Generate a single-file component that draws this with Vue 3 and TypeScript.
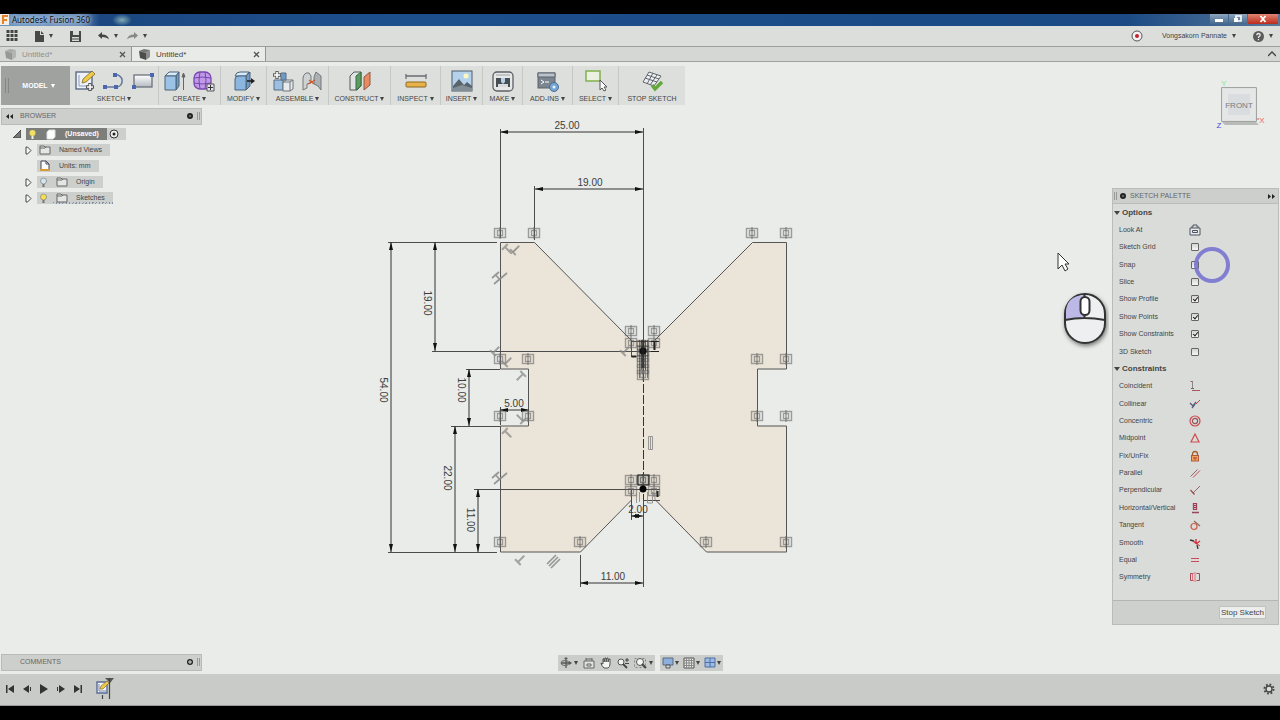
<script setup lang="ts">
import { ref } from 'vue'

interface Tool { icon: string; name: string }
interface Group { label: string; size: string; menu: boolean; tools: Tool[] }
interface Dim { x: number; y: number; text: string; vertical?: boolean }

const icons: Record<string, string> = {
  sketch: '<rect x="2" y="2" width="16" height="17" fill="#eef2f8" stroke="#5b6983" stroke-width="1.4"/><path d="M5 5v11h11" fill="none" stroke="#8d9bb6"/><path d="M8 13l1-4 9-8 3 3-9 8z" fill="#efc94a" stroke="#6d5a20" stroke-width=".7"/><path d="M16 13v8M12 17h8" stroke="#555" stroke-width="3.4"/><path d="M16 14v6M13 17h6" stroke="#fff" stroke-width="1.6"/>',
  line: '<path d="M2 17h11M11 5c10-2 11 12 2 12" fill="none" stroke="#63789a" stroke-width="1.5"/><path d="M0 15h4v4H0zM11 15h4v4h-4zM10 3h4v4h-4z" fill="#4c67ae"/>',
  rect: '<defs><linearGradient id="gr" x2="0" y2="1"><stop stop-color="#fff"/><stop offset="1" stop-color="#b4bac0"/></linearGradient></defs><rect x="2" y="5" width="18" height="12" fill="url(#gr)" stroke="#6a727b" stroke-width="1.3"/><path d="M0 15h4v4H0zM18 3h4v4h-4z" fill="#4c67ae"/>',
  extrude: '<path d="M1 6l4-4h10l-3 4z" fill="#d7eaf9" stroke="#4d6378"/><path d="M12 6l3-4v14l-3 4z" fill="#6f9bc5" stroke="#4d6378"/><path d="M1 6h11v14H1z" fill="#9cc3e6" stroke="#4d6378"/><path d="M19.500 20V5M18 7l1.500-4L21 7z" fill="#666" stroke="#666"/>',
  form: '<rect x="1" y="2" width="17" height="17" rx="6" fill="#c09ae8" stroke="#7a48b2" stroke-width="1.3"/><path d="M7 2q-2 8 0 17M12 2q2 8 0 17M1 8q8-2 17 0M1 13q8 2 17 0" fill="none" stroke="#7546ac"/><path d="M14 14h7v7h-7z" fill="#e7e3ec" stroke="#555"/><path d="M17.500 15v5M15 17.500h5" stroke="#333"/>',
  modify: '<path d="M2 6q1-4 5-4h9l-3 4z" fill="#d7eaf9" stroke="#4d6378"/><path d="M13 6l4-4v14l-4 4z" fill="#6f9bc5" stroke="#4d6378"/><path d="M2 20V9q0-3 4-3h7v14z" fill="#8ab6e0" stroke="#4d6378"/><path d="M14 11h6" stroke="#222" stroke-width="1.6"/><path d="M18 8l4 3-4 3z" fill="#222"/>',
  component: '<path d="M2 10h9v10H2z" fill="#9abfe2" stroke="#5b6c80"/><path d="M11 12l3-2h7v9l-3 2h-7z" fill="#e8ebee" stroke="#6c757d"/><path d="M11 12h7v9M18 12l3-2" fill="none" stroke="#6c757d"/><path d="M7 6l2-3h5v7H9V6z" fill="#6c9cc9" stroke="#5b6c80"/><path d="M5 1v8M1 5h8" stroke="#666" stroke-width="3.400"/><path d="M5 2v6M2 5h6" stroke="#fff" stroke-width="1.600"/>',
  joint: '<path d="M2 20V8q1-6 6-5l2 3v7l-4 1v4z" fill="#cfd2d3" stroke="#72787a"/><path d="M20 20V6l-5-4-2 5v7l4 2z" fill="#aab0b3" stroke="#72787a"/><path d="M7 14l7-4M8 10l5 4" stroke="#cc5a2c" stroke-width="1.200"/>',
  construct: '<path d="M1 6l4-4h7v14l-4 4H1z" fill="#e0e5e4" stroke="#525b58"/><path d="M7 6l5-4v14l-5 4z" fill="#5a9c61" stroke="#3d6b43"/><path d="M15 7l6-5v13l-6 5z" fill="#e98a60" stroke="#8d5a45"/>',
  inspect: '<path d="M1 6h20M1 4v5M21 4v5" stroke="#6b6f73" stroke-width="1.300"/><rect x="1" y="12" width="20" height="5" rx="1" fill="#e8b24a" stroke="#8b6720"/>',
  insert: '<rect x="1" y="1" width="20" height="20" fill="#b5d2ec" stroke="#4f5c68"/><circle cx="15" cy="6" r="2.500" fill="#fff7bd"/><path d="M2 16l6-7 5 6 3-3 5 4v4H2z" fill="#59636c"/><path d="M2 18l9-3 10 3v3H2z" fill="#838d95"/>',
  make: '<rect x="1" y="2" width="20" height="19" rx="4" fill="#e6e8e8" stroke="#5d6165" stroke-width="1.300"/><path d="M4 8h14v9H4z" fill="#464d53"/><path d="M6 14h10v3H6z" fill="#d8dadd"/><path d="M9 8h4v4l-2 2-2-2z" fill="#b7d0ea"/><path d="M4 5h14" stroke="#9da1a4"/>',
  addins: '<rect x="1" y="3" width="17" height="15" fill="#7b858f" stroke="#5b636e"/><path d="M1 3h17v4H1z" fill="#bcc2ca" stroke="#5b636e"/><path d="M4 10l3 2-3 2M8 12h4" fill="none" stroke="#fff"/><circle cx="17" cy="17" r="4.500" fill="#76a5d3" stroke="#4c6e92"/><circle cx="17" cy="17" r="1.500" fill="#e9f1f9"/>',
  select: '<rect x="1" y="1" width="14" height="10" fill="#eaf0e2" stroke="#82b04c" stroke-width="1.500"/><path d="M15 10v10l2-2 2 3 2-1-2-3h3z" fill="#fff" stroke="#555"/>',
  stop: '<path d="M8 2l12 4-7 10-11-4z" fill="#edf0f2" stroke="#60666b"/><path d="M6 5l12 4M4 8l12 4M12 3L6 14M16 5L9 15" fill="none" stroke="#60666b"/><path d="M11 15l3 4 7-7" fill="none" stroke="#62a83c" stroke-width="3.400"/>',
}

const groups: Group[] = [
  { label: 'SKETCH', size: 'g-sketch', menu: true, tools: [{ icon: 'sketch', name: 'Create Sketch' }, { icon: 'line', name: 'Line' }, { icon: 'rect', name: 'Rectangle' }] },
  { label: 'CREATE', size: 'g-pair', menu: true, tools: [{ icon: 'extrude', name: 'Extrude' }, { icon: 'form', name: 'Create Form' }] },
  { label: 'MODIFY', size: 'g-46', menu: true, tools: [{ icon: 'modify', name: 'Press Pull' }] },
  { label: 'ASSEMBLE', size: 'g-pair', menu: true, tools: [{ icon: 'component', name: 'New Component' }, { icon: 'joint', name: 'Joint' }] },
  { label: 'CONSTRUCT', size: 'g-pair', menu: true, tools: [{ icon: 'construct', name: 'Offset Plane' }] },
  { label: 'INSPECT', size: 'g-50', menu: true, tools: [{ icon: 'inspect', name: 'Measure' }] },
  { label: 'INSERT', size: 'g-42', menu: true, tools: [{ icon: 'insert', name: 'Decal' }] },
  { label: 'MAKE', size: 'g-40', menu: true, tools: [{ icon: 'make', name: '3D Print' }] },
  { label: 'ADD-INS', size: 'g-50', menu: true, tools: [{ icon: 'addins', name: 'Scripts and Add-Ins' }] },
  { label: 'SELECT', size: 'g-46', menu: true, tools: [{ icon: 'select', name: 'Select' }] },
  { label: 'STOP SKETCH', size: 'g-stop', menu: false, tools: [{ icon: 'stop', name: 'Stop Sketch' }] },
]

const options = ref([
  { id: 'grid', label: 'Sketch Grid', on: false },
  { id: 'snap', label: 'Snap', on: false },
  { id: 'slice', label: 'Slice', on: false },
  { id: 'profile', label: 'Show Profile', on: true },
  { id: 'points', label: 'Show Points', on: true },
  { id: 'constraints', label: 'Show Constraints', on: true },
  { id: 'sketch3d', label: '3D Sketch', on: false },
])

const constraints = [
  { label: 'Coincident', svg: '<path d="M3.500 1v8" stroke="#888"/><path d="M1.500 1.500h2M3 10.500h8" stroke="#a8585c"/><path d="M2 8.500h3" stroke="#666"/>' },
  { label: 'Collinear', svg: '<path d="M7 6l4-4" stroke="#c6484c"/><path d="M1 5l3 3 3-4M3 10l3-4" fill="none" stroke="#555c77" stroke-width="1.300"/>' },
  { label: 'Concentric', svg: '<circle cx="6" cy="6" r="5" fill="none" stroke="#cc4a4e" stroke-width="1.200"/><circle cx="6" cy="6" r="2.600" fill="none" stroke="#96545a" stroke-width="1.200"/>' },
  { label: 'Midpoint', svg: '<path d="M6 2l4 8H2z" fill="none" stroke="#d04a4e" stroke-width="1.200"/>' },
  { label: 'Fix/UnFix', svg: '<path d="M3.500 6V4q0-2.500 2.500-2.500T8.500 4v2" fill="none" stroke="#a5602c" stroke-width="1.300"/><rect x="2.500" y="5.500" width="7" height="5.500" fill="#eda558" stroke="#b05a3c"/><path d="M4 8h4M6 7v3" stroke="#b44"/>' },
  { label: 'Parallel', svg: '<path d="M1.500 9.500l7-7" stroke="#8d6a70"/><path d="M4 10.500l7-7" stroke="#d0484c"/>' },
  { label: 'Perpendicular', svg: '<path d="M4 9l7-7" stroke="#8d6a6c"/><path d="M1.500 6l4 4.500" stroke="#a24449" stroke-width="1.200"/>' },
  { label: 'Horizontal/Vertical', svg: '<path d="M4 1.500h4M4 3.500h4M4 5.500h4M4 7.500h4" stroke="#b4304a"/><path d="M4.500 1v7M7.500 1v7M3 10.500h7" stroke="#96465c" stroke-width="1.300"/>' },
  { label: 'Tangent', svg: '<circle cx="5" cy="7.500" r="3" fill="none" stroke="#d0584c" stroke-width="1.200"/><path d="M5 2l6 5" stroke="#8d6a5c" stroke-width="1.200"/>' },
  { label: 'Smooth', svg: '<path d="M1 3l4 1" stroke="#333" stroke-width="1.600"/><path d="M4 4l4 3M7 2v5M11 4L7 7" stroke="#d3303c" stroke-width="1.400"/><path d="M8 8l1 4" stroke="#333" stroke-width="1.300"/><path d="M7 6l4 3" stroke="#d3303c"/>' },
  { label: 'Equal', svg: '<path d="M2 4.500h8M2 7.500h8" stroke="#cc4a56"/>' },
  { label: 'Symmetry', svg: '<path d="M4.500 2.500h-3v7h3M7.500 2.500h3v7h-3" fill="none" stroke="#a24a56"/><path d="M6 1v10M3.500 2.500v7" stroke="#e4707a"/>' },
]

const tree = [
  { label: 'Named Views', arrow: true, bulb: '', icon: 'folder' },
  { label: 'Units: mm', arrow: false, bulb: '', icon: 'units' },
  { label: 'Origin', arrow: true, bulb: '#d4e2f8', icon: 'folder' },
  { label: 'Sketches', arrow: true, bulb: '#f7e04c', icon: 'folder' },
]

const dims: Dim[] = [
  { x: 567, y: 125, text: '25.00' },
  { x: 590, y: 182, text: '19.00' },
  { x: 514, y: 403, text: '5.00' },
  { x: 613, y: 576, text: '11.00' },
  { x: 638, y: 509, text: '2.00' },
  { x: 428, y: 303, text: '19.00', vertical: true },
  { x: 462, y: 390, text: '10.00', vertical: true },
  { x: 384, y: 390, text: '54.00', vertical: true },
  { x: 448, y: 478, text: '22.00', vertical: true },
  { x: 471, y: 520, text: '11.00', vertical: true },
]

// [x1, y1, x2, y2] of each dimension line; both ends carry an arrowhead
const dimLines = [
  [500, 132, 643, 132], [535, 189, 643, 189], [500, 410, 529, 410], [580, 583, 643, 583],
  [391, 242, 391, 552], [435, 242, 435, 351], [469, 369, 469, 426], [455, 426, 455, 552], [478, 489, 478, 552],
  [631, 516, 643, 516],
]

const symmetryMarks = [
  [500, 233], [534, 233], [752, 233], [786, 233],
  [500, 359], [528, 359], [757, 359], [786, 359],
  [500, 416], [528, 416], [757, 416], [786, 416],
  [500, 542], [580, 542], [706, 542], [786, 542],
  [631, 331], [654, 331], [631, 343], [654, 343], [643, 345], [643, 351], [643, 357], [643, 363], [643, 369], [643, 375],
  [631, 480], [654, 480], [643, 480], [643, 480], [631, 491], [654, 491],
]

// [x, y, angle] of perpendicular marks
const perpMarks = [
  [507, 249, 135], [515, 250, 45], [495, 351, 45], [507, 362, 45], [521, 376, 225],
  [521, 419, 315], [507, 433, 135], [520, 560, 45], [625, 351, 45],
]
</script>

<template>
  <div class="app">
    <header class="title">
      <svg class="logo" viewBox="0 0 9 11"><path d="M0 0h9v11H0z" fill="#f4efe6" /><path d="M2 10V1h6v2H4v2h3v2H4v3z" fill="#e8832a" /></svg>
      <h1>Autodesk Fusion 360</h1>
      <span class="glow"></span>
      <div class="win">
        <button aria-label="Minimize"><svg viewBox="0 0 10 8"><path d="M1 4h8v3H1z" fill="#fff" /></svg></button>
        <button aria-label="Restore"><svg viewBox="0 0 10 8"><path d="M3 1h5v5H3z" fill="none" stroke="#fff" stroke-width="1.600" /><path d="M1 3h4v4H1z" fill="#fff" /></svg></button>
        <button class="close" aria-label="Close"><svg viewBox="0 0 10 8"><path d="M2.500 1l5 6M7.500 1l-5 6" stroke="#fff" stroke-width="1.800" /></svg></button>
      </div>
    </header>

    <div class="quick">
      <button class="q" aria-label="Data Panel"><svg width="12" height="12" viewBox="0 0 12 12"><path d="M2 0v12M6 0v12M10 0v12" stroke="#444" stroke-width="3" stroke-dasharray="3 1" /></svg></button>
      <button class="q" aria-label="File"><svg width="9" height="11" viewBox="0 0 9 11"><path d="M0 0h5v4h4v7H0z" fill="#484848" /><path d="M6 0l3 3H6z" fill="#484848" /></svg><i class="caret"></i></button>
      <button class="q" aria-label="Save"><svg width="11" height="11" viewBox="0 0 11 11"><path d="M0 0h11v11H0z" fill="#484848" /><path d="M3 0h6v4H3zM2 6h7v4H2z" fill="#d8dad7" /><path d="M2 8h7" stroke="#484848" /></svg></button>
      <button class="q" aria-label="Undo"><svg width="11" height="8" viewBox="0 0 11 8"><path d="M0 3.500L4 0v2.500q6 0 7 5Q9 5 4 5v2z" fill="#444" /></svg><i class="caret"></i></button>
      <button class="q redo" aria-label="Redo"><svg width="11" height="8" viewBox="0 0 11 8"><path d="M11 3.500L7 0v2.500q-6 0-7 5Q2 5 7 5v2z" fill="#888" /></svg><i class="caret"></i></button>
      <button class="q rec" aria-label="Record"><svg width="12" height="12" viewBox="0 0 12 12"><circle cx="6" cy="6" r="5" fill="#f4f4f4" stroke="#555" /><circle cx="6" cy="6" r="2" fill="#c8202c" /></svg></button>
      <button class="q user">Vongsakorn Pannate<i class="caret"></i></button>
      <button class="q" aria-label="Help"><svg width="11" height="11" viewBox="0 0 11 11"><circle cx="5.500" cy="5.500" r="5.500" fill="#5b5b5b" /><path d="M3.800 4.200q0-1.700 1.700-1.700t1.700 1.600q0 1-1.700 1.900v1M5.500 8v1.200" fill="none" stroke="#eee" stroke-width="1.300" /></svg><i class="caret"></i></button>
    </div>

    <nav class="tabs">
      <div v-for="n in 2" :key="n" class="tab" :class="{ active: n === 2 }">
        <svg width="11" height="11" viewBox="0 0 11 11"><path d="M0 2l5-2 6 1-4 3z" fill="#777" /><path d="M0 2l7 2v7L1 9z" fill="#4d4d4d" /><path d="M7 4l4-3v7l-4 3z" fill="#8d8d8d" /></svg>
        <button class="name">Untitled*</button>
        <button class="x" aria-label="Close tab"><svg width="7" height="7" viewBox="0 0 7 7"><path d="M1 1l5 5M6 1L1 6" stroke="#555" stroke-width="1.300" /></svg></button>
      </div>
      <button class="fold" aria-label="Collapse toolbar"><svg width="8" height="6" viewBox="0 0 8 6"><path d="M0 5l4-4 4 4" fill="none" stroke="#444" stroke-width="1.300" /></svg></button>
    </nav>

    <main class="work">
      <svg class="canvas" viewBox="0 62 1280 612" role="img" aria-label="Sketch">
        <defs>
          <marker id="arrow" viewBox="0 0 8 4" refX="8" refY="2" markerWidth="8" markerHeight="4" markerUnits="userSpaceOnUse" orient="auto-start-reverse"><path d="M0 0l8 2-8 2z" fill="#111" /></marker>
          <g id="sym" fill="none" stroke="#666" stroke-opacity=".6" stroke-width="1.400"><rect x="-5.500" y="-4.500" width="11" height="9" /><rect x="-2.500" y="-2.500" width="5" height="5" /><path d="M0-6V6" /></g>
          <g id="perp" fill="none" stroke="#888" stroke-opacity=".75" stroke-width="2"><path d="M-4 3H4M0 3V-6" /></g>
        </defs>
        <path d="M500 242h34l97 98h24l97-98h34v127h-28v57h28v126h-80l-51-52h-24l-51 52h-80V426h29v-57h-29z" fill="#ebe4d8" />
        <path d="M631 340L534.500 242.500h-34v126.500h28v57h-28v126h80l51-52M655 340l97.500-97.500h34v126.500h-29v57h29v126h-80l-51-52" fill="none" stroke="#555" />
        <g class="ext">
          <path d="M500.500 129v109M643.500 128v212M643.500 500v87M534.500 186v54M388 242.500h109M388 552.500h109M432 351.500h226M466 369.500h34M451 426.500h49M500.500 407v18M474 489.500h186M580.500 555v32M631.500 489v31M643 500.500h17M631 341.500h26M631.500 340v17" />
        </g>
        <path d="M643.500 340v160" stroke="#333" stroke-width="1" stroke-dasharray="9 2" />
        <line v-for="(l, i) in dimLines" :key="'l' + i" :x1="l[0]" :y1="l[1]" :x2="l[2]" :y2="l[3]" class="dim" />
        <use v-for="(m, i) in symmetryMarks" :key="'s' + i" href="#sym" :x="m[0]" :y="m[1]" />
        <use v-for="(m, i) in perpMarks" :key="'p' + i" href="#perp" :transform="`translate(${m[0]} ${m[1]}) rotate(${m[2]})`" />
        <g fill="none" stroke="#888" stroke-opacity=".85">
          <path d="M494 484l13-11M492 478l7-6M495 474l5 6M494 284l13-11M492 278l7-6M495 274l5 6" stroke-width="1.700" />
          <path d="M547 564l9-9M549 566l9-9M551 568l9-9" stroke-width="1.700" />
          <path d="M648.500 436.500h4v13h-4zM650.500 437v12" />
          <path d="M511 254l6-6M636.500 493v10M639.500 492v10M647.500 492v11h5v-11M655 494v6" />
        </g>
        <path d="M639.500 340v38M641.500 340v30M645.500 340v30M647.500 340v38M637 346h12M637 350h12M637 356h12" fill="none" stroke="#333" stroke-opacity=".6" />
        <g stroke="#222" fill="none"><path d="M654.500 342v8M636.500 356.500h-5M657.500 491v6" stroke-width="2" /><path d="M651 351.500h8M651 341.500h8" /></g>
        <circle cx="643" cy="351" r="3.500" fill="#111" /><path d="M643 340v28" stroke="#222" stroke-width="3" stroke-opacity=".65" />
        <rect x="638" y="475" width="11" height="10" fill="none" stroke="#222" />
        <circle cx="643" cy="489" r="3.500" fill="#050505" />
        <text v-for="(d, i) in dims" :key="'d' + i" :transform="`translate(${d.x} ${d.y}) rotate(${d.vertical ? 90 : 0})`" y="4">{{ d.text }}</text>
      </svg>

      <div class="top">
        <div class="left">
          <div class="ribbon">
            <button class="model"><i class="grip"></i>MODEL<i class="caret"></i></button>
            <section v-for="g in groups" :key="g.label" class="group" :class="g.size">
              <div class="tools">
                <button v-for="t in g.tools" :key="t.icon" :aria-label="t.name"><svg width="22" height="22" viewBox="0 0 22 22" v-html="icons[t.icon]"></svg></button>
              </div>
              <button class="cap">{{ g.label }}<i v-if="g.menu" class="caret"></i></button>
            </section>
          </div>

          <div class="panel">
            <button aria-label="Collapse browser"><svg width="7" height="5" viewBox="0 0 7 5"><path d="M3 0v5L0 2.500zM7 0v5L4 2.500z" fill="#222" /></svg></button>
            <h2>BROWSER</h2>
            <button aria-label="Browser settings"><svg width="6" height="6" viewBox="0 0 6 6"><circle cx="3" cy="3" r="3" fill="#222" /><path d="M2 3h2" stroke="#aaa" /></svg></button><i class="edge"></i>
          </div>

          <ul class="tree">
            <li class="root">
              <button class="tw" aria-label="Collapse"><svg width="8" height="8" viewBox="0 0 8 8"><path d="M0 8l8-8v8z" fill="#777" stroke="#444" /></svg></button>
              <span class="node dark">
                <svg width="9" height="11" viewBox="0 0 9 11"><circle cx="4.500" cy="4" r="3" fill="#f3df62" /><path d="M3.500 7h2v3h-2z" fill="#f0f0e0" /></svg>
                <svg width="10" height="11" viewBox="0 0 10 11"><path d="M1 3l2-2h6v7l-2 2H1z" fill="#fff" stroke="#ddd" /></svg>
                <b>(Unsaved)</b>
              </span>
              <button class="radio" aria-label="Activate"><svg width="10" height="10" viewBox="0 0 10 10"><circle cx="5" cy="5" r="4" fill="#eee" stroke="#333" /><circle cx="5" cy="5" r="1.500" fill="#222" /></svg></button>
            </li>
            <li v-for="t in tree" :key="t.label">
              <button class="tw" :aria-label="'Expand ' + t.label"><svg v-if="t.arrow" width="7" height="9" viewBox="0 0 7 9"><path d="M1 1h1.500L6 4.500 2.500 8H1z" fill="#f6f6f6" stroke="#444" /></svg></button>
              <span class="node" :class="{ hatch: t.label === 'Sketches' }">
                <svg v-if="t.bulb" width="9" height="11" viewBox="0 0 9 11"><circle cx="4.500" cy="4" r="3" :fill="t.bulb" stroke="#8a8d80" stroke-width=".8" /><path d="M3.500 7h2v3h-2z" fill="#777" /></svg>
                <svg v-if="t.icon === 'folder'" width="12" height="10" viewBox="0 0 12 10"><path d="M1 9V1h4l1 1h5v7z" fill="#e4e6e4" stroke="#666" /><path d="M1 3h5l1-1" fill="none" stroke="#666" /></svg>
                <svg v-else width="12" height="12" viewBox="0 0 12 12"><path d="M2 1h5l3 3v6H2z" fill="#fafafa" stroke="#445" /><path d="M7 1v3h3" fill="none" stroke="#445" /><path d="M1 9h10v2H1z" fill="#dc9a35" /></svg>
                <span>{{ t.label }}</span>
              </span>
            </li>
          </ul>
        </div>

        <aside class="right">
          <svg class="cube" width="54" height="54" viewBox="0 0 54 54">
            <path d="M11 46h34l3 3H14z" fill="#888" opacity=".5" />
            <path d="M10.500 11.500h35v34h-35z" fill="#dfe1e0" stroke="#a2a4a4" /><path d="M12 13h32v31H12z" fill="#e5e7e7" /><path d="M17 18h22v21H17z" fill="#dadddf" />
            <path d="M46 43h2" stroke="#e55" />
            <text x="28" y="32" class="face">FRONT</text>
            <text x="13" y="10" fill="#8be68b">Y</text><text x="51" y="47" fill="#ee6464">X</text><text x="8" y="52" fill="#4a48dc">Z</text>
          </svg>

          <section class="palette">
            <header>
              <i class="edge"></i>
              <svg width="6" height="6" viewBox="0 0 6 6"><circle cx="3" cy="3" r="3" fill="#222" /><path d="M2 3h2" stroke="#aaa" /></svg>
              <h2>SKETCH PALETTE</h2>
              <button aria-label="Collapse palette"><svg width="7" height="5" viewBox="0 0 7 5"><path d="M0 0v5l3-2.500zM4 0v5l3-2.500z" fill="#222" /></svg></button>
            </header>
            <div class="rows">
              <h3><i class="caret"></i>Options</h3>
              <button class="row"><span>Look At</span><svg width="12" height="12" viewBox="0 0 12 12"><path d="M1 4h10v7H1z" fill="#e8eaea" stroke="#4b5560" /><path d="M3 4V2h2M7 2h2v2M4 1h4" fill="none" stroke="#4b5560" /><path d="M3.500 6.500h5v2h-5z" fill="none" stroke="#4b5560" /></svg></button>
              <div v-for="o in options" :key="o.id" class="row">
                <label :for="o.id">{{ o.label }}</label><input :id="o.id" v-model="o.on" type="checkbox" />
              </div>
              <h3><i class="caret"></i>Constraints</h3>
              <button v-for="c in constraints" :key="c.label" class="row"><span>{{ c.label }}</span><svg width="12" height="12" viewBox="0 0 12 12" v-html="c.svg"></svg></button>
            </div>
            <footer><button>Stop Sketch</button></footer>
          </section>
        </aside>
      </div>

      <div class="bottom">
        <div class="panel">
          <h2 class="solo">COMMENTS</h2>
          <button aria-label="Add comment"><svg width="6" height="6" viewBox="0 0 6 6"><circle cx="3" cy="3" r="3" fill="#222" /><path d="M3 1v4M1 3h4" stroke="#ddd" /></svg></button><i class="edge"></i>
        </div>
        <div class="nav">
          <div class="pack">
            <button aria-label="Orbit"><svg width="12" height="12" viewBox="0 0 12 12"><path d="M6 1v10M1 6h9" stroke="#555" stroke-width="1.300" /><ellipse cx="5" cy="6" rx="4" ry="2.500" fill="none" stroke="#666" /><path d="M4 2l2-2 2 2M9 4l3 2-3 2z" fill="#555" /></svg></button><i class="caret"></i>
            <button aria-label="Look At"><svg width="12" height="12" viewBox="0 0 12 12"><path d="M1 4h10v7H1z" fill="#e0e2e2" stroke="#666" /><path d="M3 4V1M9 4V1M3 2h6M4 7h4v2H4z" fill="none" stroke="#666" /></svg></button>
            <button aria-label="Pan"><svg width="12" height="12" viewBox="0 0 12 12"><path d="M4 11Q1 8 1 6l2 1V2l1-.5V5l1-4h1v4l1-4h1v4l1-3h1v5q0 3-2 4z" fill="#f4f4f4" stroke="#444" stroke-width=".9" /></svg></button>
            <button aria-label="Zoom"><svg width="12" height="12" viewBox="0 0 12 12"><circle cx="4" cy="5" r="3" fill="#f0f2f4" stroke="#555" /><path d="M6 7l4 4" stroke="#444" stroke-width="1.800" /><path d="M8 3h4M10 1v4M8 6.500h4" stroke="#444" /></svg></button>
            <button aria-label="Fit"><svg width="13" height="12" viewBox="0 0 13 12"><path d="M.5 1.500h11v9H.500z" fill="none" stroke="#888" stroke-dasharray="2 2" /><circle cx="6" cy="5" r="3.500" fill="#f4f6f8" stroke="#555" /><path d="M8 7l4 4" stroke="#444" stroke-width="2" /></svg></button><i class="caret"></i>
          </div>
          <div class="pack tight">
            <button aria-label="Display Settings"><svg width="12" height="12" viewBox="0 0 12 12"><path d="M1 1h10v7H1z" fill="#8dafdd" stroke="#596a80" /><path d="M4 8h4v3H4z" fill="#d7dade" stroke="#555" /></svg></button><i class="caret"></i>
            <button aria-label="Grid and Snaps"><svg width="12" height="12" viewBox="0 0 12 12"><path d="M1 1h10v10H1z" fill="#e8e8e8" stroke="#555" /><path d="M3.500 1v10M6 1v10M8.500 1v10M1 3.500h10M1 6h10M1 8.500h10" stroke="#888" /></svg></button><i class="caret"></i>
            <button aria-label="Viewports"><svg width="12" height="12" viewBox="0 0 12 12"><path d="M1 1h10v9H1z" fill="#9cbbe2" stroke="#4f6fa6" /><path d="M6 1v9M1 5.500h10" stroke="#4f6fa6" /></svg></button><i class="caret"></i>
          </div>
        </div>
      </div>

      <svg class="pointer" width="54" height="102" viewBox="0 0 54 102">
        <path d="M3 4v16l4-4 3 6 3-2-3-5h4z" fill="#fff" stroke="#333" />
        <g class="shade">
          <rect x="10" y="45" width="40" height="49" rx="20" fill="#edeff0" stroke="#333" stroke-width="2" />
        </g>
        <path d="M29 46v23q-10-1-18 2v-7q0-17 18-18z" fill="#bdb9e6" />
        <path d="M10 71q19-4 40 0M29.500 46v24" fill="none" stroke="#333" stroke-width="2" />
        <rect x="25.500" y="48" width="9" height="18" rx="4.500" fill="#fff" stroke="#333" stroke-width="2" />
      </svg>
      <span class="ring"></span>
    </main>

    <footer class="timeline">
      <button aria-label="Go to start"><svg width="10" height="10" viewBox="0 0 10 10"><path d="M1 1h1.500v8H1zM9 1v8L3 5z" fill="#333" /></svg></button>
      <button aria-label="Step back"><svg width="10" height="10" viewBox="0 0 10 10"><path d="M7 1v8L1 5zM8 3h1v4H8z" fill="#333" /></svg></button>
      <button aria-label="Play"><svg width="10" height="10" viewBox="0 0 10 10"><path d="M1 0v10l8-5z" fill="#333" /></svg></button>
      <button aria-label="Step forward"><svg width="10" height="10" viewBox="0 0 10 10"><path d="M3 1v8l6-4zM1 3h1v4H1z" fill="#333" /></svg></button>
      <button aria-label="Go to end"><svg width="10" height="10" viewBox="0 0 10 10"><path d="M7.500 1H9v8H7.500zM1 1v8l6-4z" fill="#333" /></svg></button>
      <button class="feature" aria-label="Sketch1"><svg width="20" height="24" viewBox="0 0 20 24"><path d="M1 5h10v11H1z" fill="#f0f2f6" stroke="#5a6c96" stroke-width="1.400" /><path d="M3 7v7h7" fill="none" stroke="#7b8db0" /><path d="M4 12l1-3 6-5 2 2-6 6z" fill="#edc845" stroke="#776423" stroke-width=".6" /><path d="M9 1h9l-4 5z" fill="#555" /><path d="M13.500 1v21M6.500 18v4" stroke="#444" stroke-width="1.200" /></svg></button>
      <button class="gear" aria-label="Timeline settings"><svg width="12" height="12" viewBox="0 0 12 12"><circle cx="6" cy="6" r="4.600" fill="none" stroke="#444" stroke-width="1.800" stroke-dasharray="1.800 1.800" /><circle cx="6" cy="6" r="3" fill="#ddd" stroke="#444" stroke-width="1.400" /></svg></button>
    </footer>
  </div>
</template>

<style>
body { background: #000; }
</style>

<style scoped>
.app { box-sizing: border-box; display: flex; flex-direction: column; min-height: 100vh; padding: 14px 0; background: #000; color: #444; font: 7px/10px "Liberation Sans", Arial, sans-serif; }
button { display: flex; align-items: center; justify-content: center; margin: 0; padding: 0; border: 0; background: none; color: inherit; font: inherit; cursor: pointer; }
svg { display: block; flex: none; }
h1, h2, h3, ul { margin: 0; padding: 0; font: inherit; list-style: none; }
.caret { flex: none; width: 0; margin-left: 3px; border: 2px solid transparent; border-top: 4px solid #444; border-bottom: 0; }

.title { display: flex; height: 12px; background: linear-gradient(90deg, #6c93c0 0, #6e92bd 76px, #1c4780 100px, #1d4f8d 30%, #1b4a84 88%, #587899 100%); }
.logo { width: 9px; height: 11px; }
.title h1 { padding: 0 4px 0 3px; color: #111; font: 8px/12px "Noto Sans", "Open Sans", sans-serif; text-shadow: 0 0 4px #c8d8ea, 0 0 4px #c8d8ea; }
.glow { width: 20px; margin-left: 18px; background: radial-gradient(#82aab5, transparent 70%); }
.win { display: flex; gap: 1px; margin-left: auto; padding-right: 2px; }
.win button { width: 18px; height: 10px; background: linear-gradient(#8da6bf, #47688b); }
.win .close { width: 30px; background: linear-gradient(#df8573, #bd2b1b); }
.win svg { width: 10px; height: 8px; }

.quick { display: flex; align-items: center; height: 20px; padding: 0 7px 0 6px; border-bottom: 1px solid #9c9e9b; background: #dcdedb; gap: 17px; }
.q .caret { margin-left: 5px; }
.redo { margin-left: -8px; }
.rec { margin-left: auto; }
.user { margin-left: 2px; }

.tabs { display: flex; height: 14px; border-bottom: 1px solid #a0a29f; background: #d5d7d4; }
.tab { display: flex; align-items: center; box-sizing: border-box; width: 132px; padding: 0 5px; border-right: 1px solid #929492; color: #8e908e; }
.tab > svg { opacity: .45; }
.active { width: 134px; padding: 0 5px 0 7px; background: #e9ebe8; color: #444; }
.active > svg { opacity: 1; }
.name { margin: 2px auto 0 6px; font-size: 8px; }
.fold { margin-left: auto; padding-right: 4px; }

.work { position: relative; display: flex; flex: 1; flex-direction: column; background: #e9ece9; }
.canvas { position: absolute; inset: 0; width: 100%; height: 100%; }
.canvas text { fill: #3c3c3c; font-size: 10px; text-anchor: middle; }
.ext { fill: none; stroke: #4c4c4c; stroke-width: 1; }
.dim { stroke: #333; stroke-width: 1; marker-start: url(#arrow); marker-end: url(#arrow); }
.top, .bottom { position: relative; }
.top { display: flex; flex: 1; justify-content: space-between; }
.left { padding: 4px 0 0 1px; }

.ribbon { display: flex; height: 39px; background: #dddfdc; }
.model { position: relative; width: 69px; padding-left: 6px; background: #a0a2a0; color: #fff; font-weight: bold; }
.model .caret { border-top-color: #fff; }
.grip { position: absolute; top: 12px; bottom: 12px; left: 4px; width: 2px; border: solid #858785; border-width: 0 1px; }
.group { display: flex; box-sizing: border-box; flex-direction: column; align-items: center; padding-top: 4px; border-right: 1px solid #c6c8c5; }
.group:last-child { border: 0; }
.tools { display: flex; gap: 7px; }
.cap { margin-top: 2px; white-space: nowrap; color: #444; }
.cap .caret { margin-left: 2px; }
.g-sketch { width: 89px; }
.g-pair { width: 62px; }
.g-50 { width: 50px; }
.g-46 { width: 46px; }
.g-42 { width: 42px; }
.g-40 { width: 40px; }
.g-stop { width: 66px; }

.panel { display: flex; box-sizing: border-box; align-items: center; width: 201px; height: 17px; padding: 0 1px 1px 4px; border: 1px solid #b9bbb8; background: #cdcfcc; }
.left .panel { margin-top: 3px; }
.panel h2 { margin: 0 auto 0 7px; color: #666; }
.panel .solo { margin-left: 14px; }
.edge { width: 1px; height: 8px; margin-left: 4px; border: solid #999; border-width: 0 1px; }

.tree { display: grid; gap: 4px; padding: 3px 0 0 22px; }
.tree li { display: flex; height: 12px; }
.tree .root { margin-left: -11px; }
.tw { width: 10px; margin-right: 4px; }
.node { display: flex; align-items: center; padding: 0 8px 0 2px; background: #cdcfcc; gap: 8px; }
.node span, .node b { white-space: nowrap; }
.dark { gap: 9px; background: #7c7e7c; color: #fff; }
.radio { padding: 0 7px 0 2px; background: #cdcfcc; }
.hatch { background: repeating-linear-gradient(115deg, #7f93ab 0 1px, transparent 1px 3px) 16px 100% / 100% 2px no-repeat #cdcfcc; }

.right { display: flex; flex-direction: column; width: 167px; padding: 14px 1px 0 0; }
.cube { align-self: flex-end; margin-right: 14px; font-size: 8px; text-anchor: middle; }
.face { fill: #777b82; font-size: 8px; }
.palette { margin-top: 58px; border: 1px solid #babcba; background: #dadcd9; }
.palette header { display: flex; align-items: center; height: 14px; padding: 0 3px 0 0; border-bottom: 1px solid #babcba; background: #cdcfcc; gap: 3px; }
.palette header .edge { margin-left: 1px; }
.palette header h2 { margin: 0 auto 0 1px; color: #666; }
.rows { display: grid; grid-auto-rows: 1fr; min-height: 382px; padding-bottom: 14px; }
h3 { display: flex; align-items: center; font: bold 8px/10px "Liberation Sans", Arial, sans-serif; }
h3 .caret { margin: 0 2px 0 1px; border-width: 4px 3px 0; }
.row { display: grid; grid-template-columns: 64px 24px; align-items: center; justify-content: start; justify-items: center; padding-left: 6px; }
.row > :first-child { justify-self: start; white-space: nowrap; }
input { position: relative; box-sizing: border-box; width: 8px; height: 8px; margin: 0; border: 1px solid #666; border-radius: 1px; background: linear-gradient(#d3d5d3, #f6f6f6); appearance: none; }
input:checked::after { position: absolute; top: 0; left: 2px; width: 2px; height: 4px; border: solid #222; border-width: 0 1px 1px 0; content: ""; transform: rotate(40deg); }
.palette footer { display: flex; align-items: center; justify-content: flex-end; height: 23px; padding-right: 12px; border-top: 1px solid #b4b6b4; background: #ced0ce; }
.palette footer button { width: 47px; height: 13px; border: 1px solid #c0c2c0; background: #eceeec; font-size: 8px; white-space: nowrap; }

.bottom { display: grid; grid-template-columns: 1fr auto 1fr; padding: 0 0 3px 1px; }
.nav { display: flex; gap: 5px; }
.pack { display: flex; align-items: center; height: 16px; margin-top: 1px; padding: 0 2px; background: #cbcdca; gap: 5px; }
.pack .caret { margin-left: -3px; }
.tight { gap: 4px; }

.pointer { position: absolute; top: 187px; right: 171px; }
.shade { filter: drop-shadow(1px 2px 2px rgb(0 0 0 / 50%)); }
.ring { position: absolute; top: 185px; right: 50px; box-sizing: border-box; width: 36px; height: 36px; border: 4px solid #7873cf; border-radius: 50%; opacity: .9; }

.timeline { display: flex; box-sizing: border-box; align-items: center; height: 32px; padding: 0 5px 1px; border-bottom: 1px solid #999; background: #c9cbc9; gap: 7px; }
.feature { margin-left: 6px; }
.gear { margin-left: auto; }
</style>
